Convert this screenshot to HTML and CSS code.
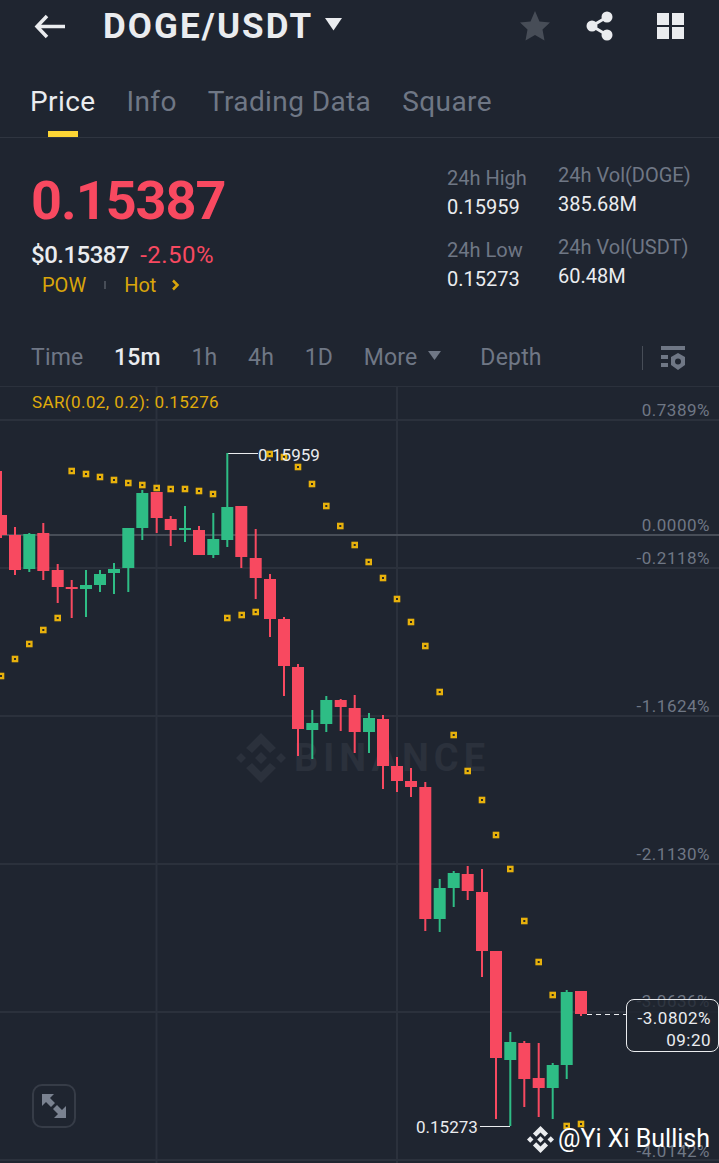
FILE: index.html
```html
<!DOCTYPE html>
<html lang="en">
<head>
    <meta charset="UTF-8">
    <meta name="viewport" content="width=device-width, initial-scale=1.0">
    <title>DOGE/USDT</title>
    <link rel="stylesheet" href="styles.css">
</head>
<body>
    <div class="header">
        <svg class="back-icon" width="32" height="25" viewBox="0 0 32 25"><path d="M31 12.500H4M13 2L3 12.500L13 23" fill="none" stroke="#eaecef" stroke-width="3.500"/></svg>
        <h1>DOGE/USDT</h1>
        <svg class="title-caret" width="19" height="13" viewBox="0 0 19 13"><path d="M1 0H18L9.500 12.500Z" fill="#eaecef"/></svg>
        <div class="header-icons">
            <svg class="star" width="30" height="30" viewBox="0 0 30 30"><path d="M15 0L19.500 10.500L30 11.500L22.500 18.500L24.500 29.500L15 24L5.500 29.500L7.500 18.500L0 11.500L10.500 10.500Z" fill="#474d57"/></svg>
            <svg class="share" width="30" height="30" viewBox="0 0 30 30"><g fill="#eaecef"><circle cx="22" cy="6" r="5.500"/><circle cx="22" cy="24" r="5.500"/><circle cx="7" cy="15" r="5.500"/></g><path d="M22 6L7 15L22 24" fill="none" stroke="#eaecef" stroke-width="3"/></svg>
            <svg width="27" height="26" viewBox="0 0 27 26"><g fill="#eaecef"><rect width="12" height="12"/><rect x="15" width="12" height="12"/><rect y="14" width="12" height="12"/><rect x="15" y="14" width="12" height="12"/></g></svg>
        </div>
    </div>

    <div class="tabs">
        <div class="tab active">Price</div>
        <div class="tab">Info</div>
        <div class="tab">Trading Data</div>
        <div class="tab">Square</div>
    </div>

    <div class="stats">
        <div class="stats-main">
            <div class="last-price">0.15387</div>
            <div class="price-row">
                <span class="fiat">$0.15387</span>
                <span class="change">-2.50%</span>
            </div>
            <div class="tags">
                <span>POW</span>
                <i class="tag-sep"></i>
                <span>Hot</span>
                <svg width="9" height="12" viewBox="0 0 9 12"><path d="M2 1.500L6.500 6L2 10.500" fill="none" stroke="#d9a50b" stroke-width="2.500"/></svg>
            </div>
        </div>
        <div class="stat-col stat-col-low">
            <div class="stat">
                <div class="stat-label">24h High</div>
                <div class="stat-value">0.15959</div>
            </div>
            <div class="stat">
                <div class="stat-label">24h Low</div>
                <div class="stat-value">0.15273</div>
            </div>
        </div>
        <div class="stat-col">
            <div class="stat">
                <div class="stat-label">24h Vol(DOGE)</div>
                <div class="stat-value">385.68M</div>
            </div>
            <div class="stat">
                <div class="stat-label">24h Vol(USDT)</div>
                <div class="stat-value">60.48M</div>
            </div>
        </div>
    </div>

    <div class="intervals">
        <span class="time">Time</span>
        <span class="current">15m</span>
        <span>1h</span>
        <span>4h</span>
        <span>1D</span>
        <span class="more">More <svg width="13" height="10" viewBox="0 0 13 10"><path d="M0 0H13L6.500 9Z" fill="#6f7785"/></svg></span>
        <span class="depth">Depth</span>
        <i class="interval-sep"></i>
        <svg width="24" height="24" viewBox="0 0 24 24"><g fill="#6f7785"><rect width="24" height="4"/><rect y="9" width="7" height="4"/><rect y="17" width="7" height="4"/><path fill-rule="evenodd" d="M17 7L24 11V19L17 24L10 19V11ZM17 12.500A3 3 0 1 0 17 18.500A3 3 0 1 0 17 12.500Z"/></g></svg>
    </div>

    <div class="chart" id="chart">
        <div class="sar">SAR(0.02, 0.2): 0.15276</div>
        <span class="axis-label axis-1">0.7389%</span>
        <span class="axis-label axis-2">0.0000%</span>
        <span class="axis-label axis-3">-0.2118%</span>
        <span class="axis-label axis-4">-1.1624%</span>
        <span class="axis-label axis-5">-2.1130%</span>
        <span class="axis-label axis-6">-3.0636%</span>
        <span class="axis-label axis-7">-4.0142%</span>
        <span class="mark mark-high">0.15959</span>
        <span class="mark mark-low">0.15273</span>
        <div class="now-box">
            <div>-3.0802%</div>
            <div>09:20</div>
        </div>
        <div class="expand">
            <svg width="26" height="26" viewBox="0 0 26 26"><g fill="#7a8290"><path d="M1 1H13L9 5L14 10L10 14L5 9L1 13Z"/><path d="M25 25H13L17 21L12 16L16 12L21 17L25 13Z"/></g></svg>
        </div>
        <div class="credit">
            <svg width="27" height="27" viewBox="0 0 100 100"><g fill="#eaecef"><path d="M50 38L62 50L50 62L38 50Z"/><path d="M12 38L24 50L12 62L0 50Z"/><path d="M88 38L100 50L88 62L76 50Z"/><path d="M50 0L78 28L66 40L50 24L34 40L22 28Z"/><path d="M50 100L78 72L66 60L50 76L34 60L22 72Z"/></g></svg>
            <span>@Yi Xi Bullish</span>
        </div>
    </div>

    <script src="chart.js"></script>
</body>
</html>
```

FILE: styles.css
```css
body {
    font-family: Roboto, sans-serif;
    margin: 0;
    padding: 0;
    height: 1163px;
    overflow: hidden;
    background-color: #1f2530;
    color: #eaecef;
}
.header {
    display: flex;
    align-items: center;
    height: 52px;
    padding: 0 35px 0 34px;
}
.back-icon {
    margin-right: 37px;
}
h1 {
    margin: 0 11px 0 0;
    font-size: 35px;
    font-weight: 700;
    letter-spacing: 2.100px;
}
.title-caret {
    margin-bottom: 3px;
}
.header-icons {
    display: flex;
    align-items: center;
    margin-left: auto;
}
.star {
    margin-right: 35px;
}
.share {
    margin-right: 42px;
}
.tabs {
    display: flex;
    gap: 31px;
    height: 86px;
    padding-left: 30px;
    box-sizing: border-box;
    border-bottom: 1px solid #2f3540;
}
.tab {
    position: relative;
    padding-top: 33px;
    font-size: 28px;
    letter-spacing: 0.4px;
    color: #6f7785;
}
.tab.active {
    color: #eaecef;
}
.tab.active::after {
    content: "";
    position: absolute;
    left: 18px;
    bottom: 0;
    width: 30px;
    height: 6px;
    background-color: #fcd535;
}
.stats {
    display: flex;
    height: 189px;
    padding-left: 31px;
}
.stats-main {
    width: 416px;
}
.last-price {
    margin-top: 29px;
    font-size: 54px;
    font-weight: 700;
    letter-spacing: -1px;
    line-height: 68px;
    color: #f84960;
}
.price-row {
    display: flex;
    gap: 11px;
    margin-top: 3px;
    font-size: 24px;
    line-height: 34px;
}
.fiat {
    font-weight: 500;
    letter-spacing: -0.5px;
}
.change {
    letter-spacing: 0.5px;
    color: #f84960;
}
.tags {
    display: flex;
    align-items: center;
    margin: -1px 0 0 11px;
    font-size: 20px;
    line-height: 28px;
    color: #d9a50b;
}
.tag-sep {
    width: 2px;
    height: 8px;
    margin: 0 18px;
    background-color: #474d57;
}
.tags svg {
    margin-left: 15px;
}
.stat-col {
    display: flex;
    flex-direction: column;
    gap: 15px;
    padding-top: 23px;
}
.stat-col-low {
    width: 111px;
    padding-top: 26px;
}
.stat-label {
    font-size: 20px;
    line-height: 28px;
    color: #6f7785;
}
.stat-value {
    margin-top: 1px;
    font-size: 20px;
    line-height: 28px;
}
.intervals {
    display: flex;
    align-items: center;
    height: 59px;
    padding: 2px 0 0 31px;
    box-sizing: border-box;
    font-size: 23px;
    letter-spacing: 0.2px;
    color: #6f7785;
}
.intervals span {
    margin-right: 30.600px;
}
.intervals .current {
    font-weight: 500;
    color: #eaecef;
}
.intervals .more {
    margin-right: 39px;
}
.more svg {
    margin: 0 0 4px 5px;
}
.intervals .depth {
    margin-right: 100px;
}
.interval-sep {
    width: 1px;
    height: 24px;
    margin-right: 18px;
    background-color: #474d57;
}
.chart {
    position: relative;
    height: 777px;
    overflow: hidden;
    border-top: 1px solid #2b313c;
    box-sizing: border-box;
}
.chart svg.plot {
    position: absolute;
    left: 0;
    top: -1px;
}
.sar {
    position: absolute;
    left: 32px;
    top: 5px;
    font-size: 17px;
    letter-spacing: 0.4px;
    color: #e0ac0b;
}
.axis-label {
    position: absolute;
    right: 9px;
    font-size: 17px;
    letter-spacing: 0.5px;
    line-height: 20px;
    color: #6f7785;
}
.axis-1 { top: 13px; }
.axis-2 { top: 128px; }
.axis-3 { top: 161px; }
.axis-4 { top: 309px; }
.axis-5 { top: 457px; }
.axis-6 { top: 604px; }
.axis-7 { top: 754px; }
.mark {
    position: absolute;
    font-size: 17px;
    line-height: 20px;
    color: #eaecef;
}
.mark-high {
    left: 258px;
    top: 58px;
}
.mark-low {
    left: 416px;
    top: 730px;
}
.now-box {
    position: absolute;
    left: 626px;
    top: 612px;
    width: 93px;
    height: 53px;
    padding: 7px 7px 0 0;
    box-sizing: border-box;
    border: 1px solid #eaecef;
    border-radius: 8px;
    background-color: rgba(31, 37, 48, 0.8);
    font-size: 17px;
    letter-spacing: 0.5px;
    line-height: 22px;
    text-align: right;
}
.expand {
    position: absolute;
    left: 32px;
    top: 697px;
    display: flex;
    align-items: center;
    justify-content: center;
    width: 44px;
    height: 44px;
    box-sizing: border-box;
    border: 2px solid #363c47;
    border-radius: 10px;
}
.credit {
    position: absolute;
    left: 527px;
    top: 736px;
    display: flex;
    align-items: center;
    gap: 4px;
    font-size: 25px;
    line-height: 32px;
    color: #fff;
    white-space: nowrap;
}
```

FILE: chart.js
```js
const UP = '#2ebd85';
const DOWN = '#f84960';

// x, wick top, wick bottom, body top, body bottom, direction (1 = up)
const candles = [
    [1, 471, 538, 515, 535, 0], [15, 527, 575, 535, 570, 0], [29.3, 533, 572, 534, 569, 1],
    [43.3, 523, 580, 533, 571, 0], [57.7, 564, 603, 570, 587, 0], [71.7, 580, 618, 587, 589, 0],
    [86, 570, 617, 585, 589, 1], [100, 570, 592, 574, 585, 1], [114, 563, 594, 569, 573, 1],
    [128.3, 528, 592, 528, 568, 1], [142.3, 490, 540, 493, 528, 1], [156.7, 492, 533, 492, 518, 0],
    [170.7, 516, 546, 519, 530, 0], [185, 506, 542, 528, 530, 1], [199, 526, 555, 530, 555, 0],
    [213.3, 513, 558, 539, 555, 1], [227.3, 453, 547, 507, 540, 1], [241.3, 506, 568, 506, 557, 0],
    [255.7, 529, 599, 558, 578, 0], [270, 574, 637, 579, 619, 0], [284, 617, 696, 619, 666, 0],
    [298, 664, 756, 667, 729, 0], [312.3, 710, 759, 723, 730, 1], [326.3, 696, 732, 700, 724, 1],
    [340.7, 699, 731, 700, 707, 0], [354.7, 695, 753, 708, 732, 0], [369, 713, 753, 718, 732, 1],
    [383, 715, 789, 719, 766, 0], [397, 757, 792, 766, 781, 0], [411, 768, 797, 781, 787, 0],
    [425.3, 782, 931, 787, 919, 0], [439.7, 879, 932, 888, 919, 1], [453.7, 871, 907, 873, 888, 1],
    [467.7, 866, 900, 874, 891, 0], [482, 869, 977, 892, 951, 0], [496, 951, 1119, 951, 1058, 0],
    [510.3, 1032, 1126, 1042, 1060, 1], [524.3, 1041, 1107, 1043, 1079, 0], [538.7, 1043, 1117, 1078, 1088, 0],
    [552.7, 1063, 1119, 1065, 1088, 1], [566.7, 990, 1079, 992, 1065, 1], [581, 991, 1016, 991, 1014, 0]
];

const sarDots = [
    [1, 676], [15, 659], [29.3, 644], [43.3, 630], [57.7, 618],
    [71.7, 471], [86, 474], [100, 477], [114, 480], [128.3, 483], [142.3, 485], [156.7, 488],
    [170.7, 489], [185, 489], [199, 491], [213, 494],
    [227.3, 618], [241.7, 615], [255.7, 612],
    [269.7, 454], [284, 457], [298, 467], [312, 484], [326.3, 506], [340.3, 526], [354.7, 545],
    [368.7, 562], [383, 578], [397, 599], [411, 622], [425.3, 646], [439.7, 692], [453.7, 735],
    [467.7, 771], [482, 800], [496, 835], [510.3, 869], [524.3, 921], [538.7, 962], [552.7, 995],
    [566.7, 1126], [581, 1124]
];

let svg = '';

function rect(x, y, w, h, fill) {
    svg += `<rect x="${x}" y="${y}" width="${w}" height="${h}" fill="${fill}"/>`;
}

// grid
[420, 568, 716, 864, 1012, 1160].forEach(y => rect(0, y - 1, 719, 2, '#2b313c'));
[156.5, 397].forEach(x => rect(x - 1, 386, 2, 777, '#2b313c'));
rect(0, 534, 719, 2, '#474d57');

// watermark
svg += '<g fill="#2b313c"><g transform="translate(236 733) scale(0.5)">' +
    '<path d="M50 38L62 50L50 62L38 50Z"/><path d="M10 40L20 50L10 60L0 50Z"/><path d="M90 40L100 50L90 60L80 50Z"/>' +
    '<path d="M50 0L80 30L68 40L50 22L32 40L20 30Z"/><path d="M50 100L80 70L68 60L50 78L32 60L20 70Z"/></g>' +
    '<text x="294" y="771" font-family="Roboto, sans-serif" font-weight="700" font-size="38" textLength="191">BINANCE</text></g>';

// price guides
rect(227, 453, 31, 1, '#eaecef');
rect(480, 1126, 30, 1, '#eaecef');
svg += '<path d="M587 1014.500H626" stroke="#eaecef" stroke-dasharray="5 4"/>';

candles.forEach(([x, wickTop, wickBottom, bodyTop, bodyBottom, up]) => {
    const color = up ? UP : DOWN;
    rect(x - 1, wickTop, 2, wickBottom - wickTop, color);
    rect(x - 6, bodyTop, 12, Math.max(bodyBottom - bodyTop, 2), color);
});

sarDots.forEach(([x, y]) => {
    rect(x - 3.3, y - 3.3, 6.6, 6.6, '#e7b10c');
    rect(x - 1, y - 1, 2, 2, '#2a2a24');
});

const chart = document.getElementById('chart');
chart.insertAdjacentHTML('afterbegin',
    `<svg class="plot" width="719" height="777" viewBox="0 386 719 777">${svg}</svg>`);
```
